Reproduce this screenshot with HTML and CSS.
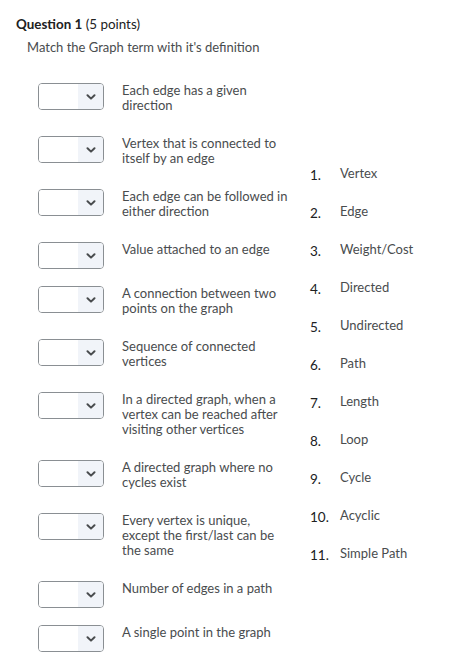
FILE: index.html
```html
<!DOCTYPE html>
<html>
<head>
<meta charset="utf-8">
<link rel="stylesheet" href="styles.css">
</head>
<body>
<div class="q">
  <div class="q-title"><span class="q-num">Question 1</span> (5 points)</div>
  <div class="q-text">Match the Graph term with it's definition</div>
  <div class="match">
    <div class="defs">
      <div class="row"><div class="sel"><span class="sel-val"></span><span class="sel-btn"><svg width="10" height="6" viewBox="0 0 10 6"><polyline points="1.5,1.2 5,4.6 8.5,1.2" fill="none" stroke="#494c4e" stroke-width="2" stroke-linecap="round" stroke-linejoin="round"/></svg></span></div><div class="def">Each edge has a given<br>direction</div></div>
      <div class="row"><div class="sel"><span class="sel-val"></span><span class="sel-btn"><svg width="10" height="6" viewBox="0 0 10 6"><polyline points="1.5,1.2 5,4.6 8.5,1.2" fill="none" stroke="#494c4e" stroke-width="2" stroke-linecap="round" stroke-linejoin="round"/></svg></span></div><div class="def">Vertex that is connected to<br>itself by an edge</div></div>
      <div class="row"><div class="sel"><span class="sel-val"></span><span class="sel-btn"><svg width="10" height="6" viewBox="0 0 10 6"><polyline points="1.5,1.2 5,4.6 8.5,1.2" fill="none" stroke="#494c4e" stroke-width="2" stroke-linecap="round" stroke-linejoin="round"/></svg></span></div><div class="def">Each edge can be followed in<br>either direction</div></div>
      <div class="row"><div class="sel"><span class="sel-val"></span><span class="sel-btn"><svg width="10" height="6" viewBox="0 0 10 6"><polyline points="1.5,1.2 5,4.6 8.5,1.2" fill="none" stroke="#494c4e" stroke-width="2" stroke-linecap="round" stroke-linejoin="round"/></svg></span></div><div class="def">Value attached to an edge</div></div>
      <div class="row"><div class="sel"><span class="sel-val"></span><span class="sel-btn"><svg width="10" height="6" viewBox="0 0 10 6"><polyline points="1.5,1.2 5,4.6 8.5,1.2" fill="none" stroke="#494c4e" stroke-width="2" stroke-linecap="round" stroke-linejoin="round"/></svg></span></div><div class="def">A connection between two<br>points on the graph</div></div>
      <div class="row"><div class="sel"><span class="sel-val"></span><span class="sel-btn"><svg width="10" height="6" viewBox="0 0 10 6"><polyline points="1.5,1.2 5,4.6 8.5,1.2" fill="none" stroke="#494c4e" stroke-width="2" stroke-linecap="round" stroke-linejoin="round"/></svg></span></div><div class="def">Sequence of connected<br>vertices</div></div>
      <div class="row"><div class="sel"><span class="sel-val"></span><span class="sel-btn"><svg width="10" height="6" viewBox="0 0 10 6"><polyline points="1.5,1.2 5,4.6 8.5,1.2" fill="none" stroke="#494c4e" stroke-width="2" stroke-linecap="round" stroke-linejoin="round"/></svg></span></div><div class="def">In a directed graph, when a<br>vertex can be reached after<br>visiting other vertices</div></div>
      <div class="row"><div class="sel"><span class="sel-val"></span><span class="sel-btn"><svg width="10" height="6" viewBox="0 0 10 6"><polyline points="1.5,1.2 5,4.6 8.5,1.2" fill="none" stroke="#494c4e" stroke-width="2" stroke-linecap="round" stroke-linejoin="round"/></svg></span></div><div class="def">A directed graph where no<br>cycles exist</div></div>
      <div class="row"><div class="sel"><span class="sel-val"></span><span class="sel-btn"><svg width="10" height="6" viewBox="0 0 10 6"><polyline points="1.5,1.2 5,4.6 8.5,1.2" fill="none" stroke="#494c4e" stroke-width="2" stroke-linecap="round" stroke-linejoin="round"/></svg></span></div><div class="def">Every vertex is unique,<br>except the first/last can be<br>the same</div></div>
      <div class="row"><div class="sel"><span class="sel-val"></span><span class="sel-btn"><svg width="10" height="6" viewBox="0 0 10 6"><polyline points="1.5,1.2 5,4.6 8.5,1.2" fill="none" stroke="#494c4e" stroke-width="2" stroke-linecap="round" stroke-linejoin="round"/></svg></span></div><div class="def">Number of edges in a path</div></div>
      <div class="row"><div class="sel"><span class="sel-val"></span><span class="sel-btn"><svg width="10" height="6" viewBox="0 0 10 6"><polyline points="1.5,1.2 5,4.6 8.5,1.2" fill="none" stroke="#494c4e" stroke-width="2" stroke-linecap="round" stroke-linejoin="round"/></svg></span></div><div class="def">A single point in the graph</div></div>
    </div>
    <ol class="terms">
      <li class="term"><span class="t-num">1.</span><span class="t-text">Vertex</span></li>
      <li class="term"><span class="t-num">2.</span><span class="t-text">Edge</span></li>
      <li class="term"><span class="t-num">3.</span><span class="t-text">Weight/Cost</span></li>
      <li class="term"><span class="t-num">4.</span><span class="t-text">Directed</span></li>
      <li class="term"><span class="t-num">5.</span><span class="t-text">Undirected</span></li>
      <li class="term"><span class="t-num">6.</span><span class="t-text">Path</span></li>
      <li class="term"><span class="t-num">7.</span><span class="t-text">Length</span></li>
      <li class="term"><span class="t-num">8.</span><span class="t-text">Loop</span></li>
      <li class="term"><span class="t-num">9.</span><span class="t-text">Cycle</span></li>
      <li class="term"><span class="t-num">10.</span><span class="t-text">Acyclic</span></li>
      <li class="term"><span class="t-num">11.</span><span class="t-text">Simple Path</span></li>
    </ol>
  </div>
</div>
</body>
</html>
```

FILE: styles.css
```css
html, body {
  margin: 0;
  padding: 0;
  background: #ffffff;
}

body {
  font-family: Lato, "Open Sans", "Liberation Sans", sans-serif;
  color: #494c4e;
  font-size: 13px;
}

.q {
  padding: 16px 0 0 16px;
}

.q-title {
  font-size: 13.4px;
  line-height: 17px;
  color: #202122;
}

.q-num {
  font-weight: 700;
}

.q-text {
  margin: 6px 0 0 11px;
  line-height: 16px;
  font-size: 13px;
  color: #494c4e;
}

.match {
  display: flex;
  align-items: flex-start;
  margin: 28px 0 0 22px;
}

.defs {
  display: flex;
  flex-direction: column;
}

.row {
  display: flex;
  align-items: flex-start;
}

.sel {
  flex: none;
  width: 66px;
  height: 27px;
  box-sizing: border-box;
  border: 1px solid #8a8f93;
  border-radius: 4px;
  display: flex;
  overflow: hidden;
  margin-bottom: 17px;
}

.sel-val {
  flex: 1;
  background: #ffffff;
}

.sel-btn {
  width: 25px;
  background: #f1f4f9;
  display: flex;
  align-items: center;
  justify-content: center;
}

.def {
  margin-left: 18px;
  width: 170px;
  line-height: 15px;
  padding-bottom: 23px;
  white-space: nowrap;
}

.terms {
  list-style: none;
  margin: 82px 0 0 18px;
  padding: 0;
}

.term {
  display: flex;
  align-items: flex-start;
  height: 38px;
  line-height: 16px;
}

.t-num {
  width: 30px;
  padding-top: 2px;
  color: #202122;
  font-size: 13.5px;
}

.t-text {
  color: #494c4e;
}
```
